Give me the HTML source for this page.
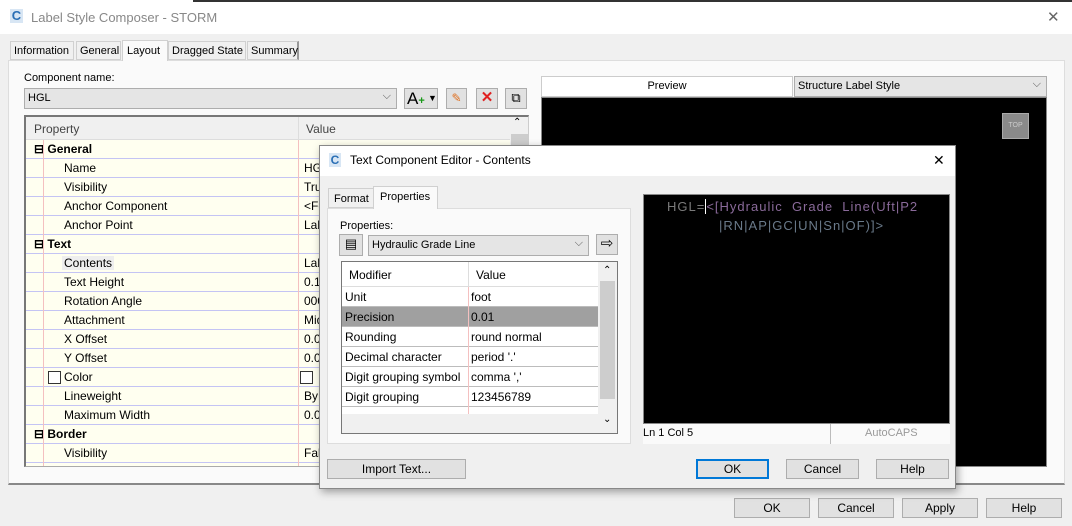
<!DOCTYPE html>
<html><head><style>
*{box-sizing:border-box;margin:0;padding:0}
body{width:1072px;height:526px;overflow:hidden;background:#f0f0f0;font-family:"Liberation Sans",sans-serif;font-size:12px;color:#000;position:relative}
.a{position:absolute}
.btn{position:absolute;background:#e1e1e1;border:1px solid #adadad;text-align:center;line-height:18px;font-size:12px}
.row{position:absolute;left:0;width:484px;height:19px;border-bottom:1px solid #c4c4f4;background:#fffff0}
.row span{position:absolute;top:2px}
.mrow{position:absolute;left:0;width:256px;height:20px;border-bottom:1px solid #bcbcbc;background:#fff;font-size:12px}
.mrow span{position:absolute;top:3px}
.tab{position:absolute;top:41px;height:19px;border:1px solid #d0d0d0;padding:3px 3px;font-size:11px;white-space:nowrap}
</style></head><body>
<div class="a" style="left:0;top:0;width:1072px;height:34px;background:#fff"></div>
<div class="a" style="left:193px;top:0;width:879px;height:2px;background:#333"></div>
<div class="a" style="left:10px;top:9px;width:13px;height:14px;background:#d8e6f4;color:#2a6fb5;font-weight:bold;font-size:13px;line-height:14px;text-align:center">C</div>
<div class="a" style="left:31px;top:10px;font-size:13px;color:#888">Label Style Composer - STORM</div>
<div class="a" style="left:1047px;top:8px;font-size:15px;color:#666">✕</div>
<div class="tab" style="left:10px;width:64px">Information</div>
<div class="tab" style="left:76px;width:45px">General</div>
<div class="tab" style="left:122px;top:40px;width:46px;height:21px;border-bottom:none;background:#fafafa;padding:4px 4px;z-index:2">Layout</div>
<div class="tab" style="left:168px;width:78px">Dragged State</div>
<div class="tab" style="left:247px;width:52px;border-right:2px solid #999">Summary</div>
<div class="a" style="left:8px;top:60px;width:1057px;height:425px;background:#fafafa;border:1px solid #ddd;border-bottom:2px solid #888"></div>
<div class="a" style="left:24px;top:72px;font-size:11px">Component name:</div>
<div class="a" style="left:24px;top:88px;width:373px;height:21px;background:#e5e5e5;border:1px solid #adadad;padding:3px 3px;font-size:11px">HGL<span style="position:absolute;right:5px;top:1px;color:#555">⌵</span></div>
<div class="btn" style="left:404px;top:88px;width:34px;height:21px;text-align:left;padding-left:2px;font-size:17px;line-height:19px">A<span style="color:#1a9a1a;font-size:11px;font-weight:bold">+</span><span style="position:absolute;left:23px;top:0;font-size:9px">▼</span></div>
<div class="btn" style="left:446px;top:88px;width:21px;height:21px;color:#e07020;font-size:12px">✎</div>
<div class="btn" style="left:476px;top:88px;width:22px;height:21px;color:#e02020;font-weight:bold;font-size:15px">✕</div>
<div class="btn" style="left:505px;top:88px;width:22px;height:21px;font-size:13px">⧉</div>
<div class="a" style="left:24px;top:115px;width:505px;height:352px;border:2px solid #777;border-right:1px solid #ccc;border-bottom:1px solid #aaa;background:#f0f0f0;overflow:hidden">
 <div class="a" style="left:0;top:0;width:484px;height:23px;background:#f0f0f0;border-bottom:1px solid #ddd"><span class="a" style="left:8px;top:5px;color:#444">Property</span><span class="a" style="left:280px;top:5px;color:#444">Value</span><span class="a" style="left:272px;top:0;width:1px;height:23px;background:#ddd"></span></div>
 <div class="a" style="left:0;top:23px;width:484px;height:330px">
  <div class="row" style="top:0"><span style="left:8px;font-weight:bold">⊟ General</span></div>
  <div class="row" style="top:19px"><span style="left:38px">Name</span><span style="left:278px">HG</span></div>
  <div class="row" style="top:38px"><span style="left:38px">Visibility</span><span style="left:278px">Tru</span></div>
  <div class="row" style="top:57px"><span style="left:38px">Anchor Component</span><span style="left:278px">&lt;Fe</span></div>
  <div class="row" style="top:76px"><span style="left:38px">Anchor Point</span><span style="left:278px">Lab</span></div>
  <div class="row" style="top:95px"><span style="left:8px;font-weight:bold">⊟ Text</span></div>
  <div class="row" style="top:114px"><span style="left:36px;background:#eee;padding:0 2px">Contents</span><span style="left:278px">Lab</span></div>
  <div class="row" style="top:133px"><span style="left:38px">Text Height</span><span style="left:278px">0.10</span></div>
  <div class="row" style="top:152px"><span style="left:38px">Rotation Angle</span><span style="left:278px">000</span></div>
  <div class="row" style="top:171px"><span style="left:38px">Attachment</span><span style="left:278px">Mid</span></div>
  <div class="row" style="top:190px"><span style="left:38px">X Offset</span><span style="left:278px">0.00</span></div>
  <div class="row" style="top:209px"><span style="left:38px">Y Offset</span><span style="left:278px">0.00</span></div>
  <div class="row" style="top:228px"><span style="left:22px;top:3px;width:13px;height:13px;border:1px solid #333;background:#fff"></span><span style="left:38px">Color</span><span style="left:274px;top:3px;width:13px;height:13px;border:1px solid #333;background:#fff"></span></div>
  <div class="row" style="top:247px"><span style="left:38px">Lineweight</span><span style="left:278px">ByB</span></div>
  <div class="row" style="top:266px"><span style="left:38px">Maximum Width</span><span style="left:278px">0.00</span></div>
  <div class="row" style="top:285px"><span style="left:8px;font-weight:bold">⊟ Border</span></div>
  <div class="row" style="top:304px"><span style="left:38px">Visibility</span><span style="left:278px">Fals</span></div>
  <div class="row" style="top:323px"></div>
  <div class="a" style="left:17px;top:0;width:1px;height:330px;background:#f4c0c0"></div>
  <div class="a" style="left:272px;top:0;width:1px;height:330px;background:#f4c0c0"></div>
 </div>
 <div class="a" style="left:484px;top:0;width:19px;height:350px;background:#f0f0f0"><div class="a" style="left:3px;top:0;font-size:10px">⌃</div><div class="a" style="left:1px;top:17px;width:17px;height:60px;background:#cdcdcd"></div></div>
</div>
<div class="a" style="left:541px;top:76px;width:252px;height:21px;background:#fff;border:1px solid #ccc;text-align:center;line-height:19px;font-size:11px">Preview</div>
<div class="a" style="left:794px;top:76px;width:253px;height:21px;background:#e5e5e5;border:1px solid #adadad;padding:3px 3px;font-size:11px">Structure Label Style<span style="position:absolute;right:5px;top:1px;color:#555">⌵</span></div>
<div class="a" style="left:541px;top:97px;width:506px;height:370px;background:#000;border:1px solid #888"></div>
<div class="a" style="left:1002px;top:113px;width:27px;height:26px;background:#8a8a8a;border:1px solid #aaa;color:#ccc;font-size:7px;text-align:center;line-height:24px">TOP</div>
<div class="btn" style="left:734px;top:498px;width:76px;height:20px">OK</div>
<div class="btn" style="left:818px;top:498px;width:76px;height:20px">Cancel</div>
<div class="btn" style="left:902px;top:498px;width:76px;height:20px">Apply</div>
<div class="btn" style="left:986px;top:498px;width:76px;height:20px">Help</div>
<div class="a" style="left:319px;top:145px;width:637px;height:344px;background:#f0f0f0;border:1px solid #888;box-shadow:2px 3px 8px rgba(0,0,0,.35)">
 <div class="a" style="left:0;top:0;width:635px;height:30px;background:#fff"></div>
 <div class="a" style="left:9px;top:7px;width:12px;height:14px;background:#d8e6f4;color:#2a6fb5;font-weight:bold;font-size:12px;line-height:14px;text-align:center">C</div>
 <div class="a" style="left:30px;top:7px;font-size:12px">Text Component Editor - Contents</div>
 <div class="a" style="left:613px;top:6px;font-size:14px">✕</div>
 <div class="a" style="left:8px;top:42px;width:46px;height:20px;border:1px solid #d0d0d0;padding:4px 5px;font-size:11px">Format</div>
 <div class="a" style="left:53px;top:40px;width:65px;height:23px;border:1px solid #d0d0d0;border-bottom:none;background:#fafafa;padding:4px 6px;z-index:2;font-size:11px">Properties</div>
 <div class="a" style="left:7px;top:62px;width:304px;height:236px;background:#fafafa;border:1px solid #ddd"></div>
 <div class="a" style="left:20px;top:74px;font-size:11px">Properties:</div>
 <div class="btn" style="left:19px;top:88px;width:24px;height:22px;font-size:13px">▤</div>
 <div class="a" style="left:48px;top:89px;width:221px;height:21px;background:#e5e5e5;border:1px solid #adadad;padding:3px 3px;font-size:11px">Hydraulic Grade Line<span style="position:absolute;right:5px;top:1px;color:#555">⌵</span></div>
 <div class="btn" style="left:276px;top:88px;width:22px;height:21px;font-size:15px;line-height:18px">⇨</div>
 <div class="a" style="left:21px;top:115px;width:277px;height:173px;border:1px solid #777;background:#f0f0f0;overflow:hidden">
  <div class="a" style="left:0;top:0;width:256px;height:25px;background:#fff;border-bottom:1px solid #ddd"><span class="a" style="left:7px;top:6px">Modifier</span><span class="a" style="left:134px;top:6px">Value</span><span class="a" style="left:126px;top:0;width:1px;height:25px;background:#ddd"></span></div>
  <div class="mrow" style="top:25px"><span style="left:3px">Unit</span><span style="left:129px">foot</span></div>
  <div class="mrow" style="top:45px;background:#a0a0a0"><span style="left:3px">Precision</span><span style="left:129px">0.01</span></div>
  <div class="mrow" style="top:65px"><span style="left:3px">Rounding</span><span style="left:129px">round normal</span></div>
  <div class="mrow" style="top:85px"><span style="left:3px">Decimal character</span><span style="left:129px">period '.'</span></div>
  <div class="mrow" style="top:105px"><span style="left:3px;width:122px;overflow:hidden;white-space:nowrap">Digit grouping symbol</span><span style="left:129px">comma ','</span></div>
  <div class="mrow" style="top:125px"><span style="left:3px">Digit grouping</span><span style="left:129px">123456789</span></div>
  <div class="mrow" style="top:145px;height:7px;border:none"></div>
  <div class="a" style="left:126px;top:25px;width:1px;height:127px;background:#f4c0c0"></div>
  <div class="a" style="left:256px;top:0;width:19px;height:171px;background:#f0f0f0"><div class="a" style="left:5px;top:3px;font-size:10px">⌃</div><div class="a" style="left:2px;top:19px;width:15px;height:118px;background:#cdcdcd"></div><div class="a" style="left:5px;top:152px;font-size:10px">⌄</div></div>
 </div>
 <div class="a" style="left:323px;top:48px;width:307px;height:230px;background:#000;border:1px solid #888;font-family:'Liberation Sans',sans-serif;font-size:13px;color:#7a7a7a;letter-spacing:1px">
  <div class="a" style="left:23px;top:4px;white-space:nowrap">HGL=<span style="border-left:1px solid #fff;color:#8a6a9a">&lt;[Hydraulic&nbsp; Grade&nbsp; Line(Uft|P2</span></div>
  <div class="a" style="left:75px;top:23px;white-space:nowrap;color:#6a7a8a">|RN|AP|GC|UN|Sn|OF)]&gt;</div>
 </div>
 <div class="a" style="left:323px;top:278px;width:307px;height:20px;background:#fafafa;font-size:11px"><span class="a" style="left:0;top:3px">Ln 1 Col 5</span><span class="a" style="left:187px;top:0;width:1px;height:20px;background:#bbb"></span><span class="a" style="left:222px;top:3px;color:#999">AutoCAPS</span></div>
 <div class="btn" style="left:7px;top:313px;width:139px;height:20px">Import Text...</div>
 <div class="btn" style="left:376px;top:313px;width:73px;height:20px;border:2px solid #0078d7;line-height:16px">OK</div>
 <div class="btn" style="left:466px;top:313px;width:73px;height:20px">Cancel</div>
 <div class="btn" style="left:556px;top:313px;width:73px;height:20px">Help</div>
</div>
</body></html>
